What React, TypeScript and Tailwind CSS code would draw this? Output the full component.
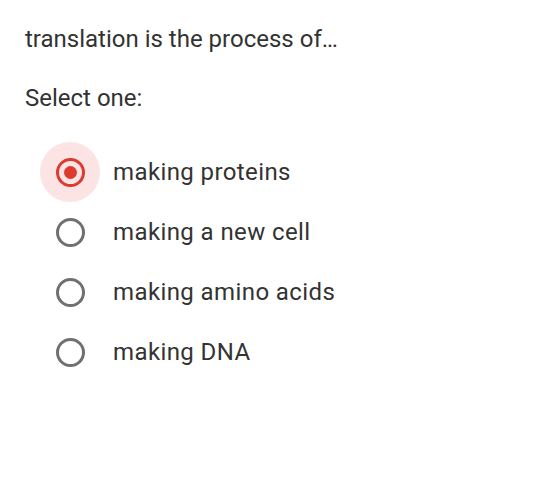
import { useState } from "react";

const options = ["making proteins", "making a new cell", "making amino acids", "making DNA"];

export default function App() {
  const [selected, setSelected] = useState(0);
  return (
    <div className="w-[540px] h-[499px] bg-white text-[#333333] font-['Roboto',sans-serif] px-[25px] pt-[22px]">
      <p className="text-[24px] leading-[34px]">translation is the process of…</p>
      <p className="text-[24px] leading-[34px] mt-[25px]">Select one:</p>
      <div className="mt-[27px] flex flex-col">
        {options.map((o, i) => (
          <label key={o} className="flex items-center h-[60px] cursor-pointer" onClick={() => setSelected(i)}>
            <span
              className={
                "w-[60px] h-[60px] ml-[15px] rounded-full flex items-center justify-center shrink-0 " +
                (selected === i ? "bg-[#fbe4e3]" : "")
              }
            >
              <span
                className={
                  "w-[29px] h-[29px] rounded-full border-[3px] flex items-center justify-center " +
                  (selected === i ? "border-[#dc3b30]" : "border-[#707070]")
                }
              >
                {selected === i && <span className="w-[13px] h-[13px] rounded-full bg-[#dc3b30]" />}
              </span>
            </span>
            <span className="text-[24px] tracking-[0.4px] ml-[13px]">{o}</span>
          </label>
        ))}
      </div>
    </div>
  );
}
